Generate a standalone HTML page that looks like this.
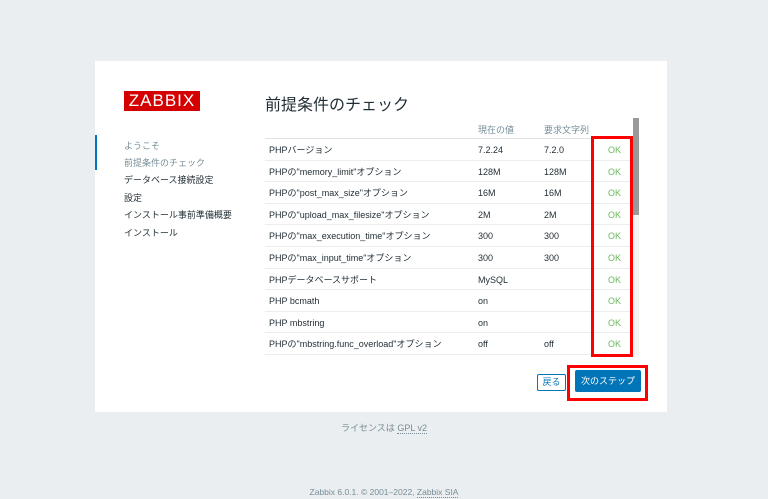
<!DOCTYPE html>
<html><head><meta charset="utf-8"><style>
*{margin:0;padding:0;box-sizing:border-box}
body{width:768px;height:499px;background:#ebeef0;font-family:"Liberation Sans","Noto Sans CJK JP",sans-serif;font-size:9px;color:#1f2c33;position:relative;overflow:hidden}
.panel{position:absolute;left:95px;top:61px;width:572px;height:351px;background:#fff}
.logo{position:absolute;left:124px;top:91px;width:76px;height:20px;background:#d40000;color:#fff;font-size:17px;letter-spacing:1px;text-align:center;line-height:20px}
.title{position:absolute;left:265px;top:91px;font-size:16px;color:#1f2c33}
.navbar{position:absolute;left:95px;top:135px;width:2px;height:35px;background:#0275b8}
.nav{position:absolute;left:124px;font-size:9px}
.g{color:#768d99}
.row{position:absolute;left:265px;width:367px;height:21.6px;border-bottom:1px solid #ebeef0;line-height:23px}
.row span{position:absolute}
.c1{left:4px}.c2{left:213px}.c3{left:279px}.c4{left:343px;color:#6cb85a}
.hdr{position:absolute;top:123px;color:#768d99}
.scroll{position:absolute;left:633px;top:118px;width:6px;height:238px;background:#f4f4f4}
.thumb{position:absolute;left:633px;top:118px;width:6px;height:97px;background:#999}
.red{position:absolute;border:3px solid #f00}
.btn{position:absolute;font-size:9px;text-align:center;border-radius:2px}
.foot{position:absolute;width:768px;text-align:center;color:#768d99;font-size:9px}
.foot u{text-decoration:none;border-bottom:1px dotted #768d99}
</style></head><body>
<div class="panel"></div>
<div class="logo">ZABBIX</div>
<div class="title">前提条件のチェック</div>
<div class="navbar"></div>
<div class="nav g" style="top:139px">ようこそ</div>
<div class="nav g" style="top:156px">前提条件のチェック</div>
<div class="nav" style="top:173px">データベース接続設定</div>
<div class="nav" style="top:191px">設定</div>
<div class="nav" style="top:208px">インストール事前準備概要</div>
<div class="nav" style="top:226px">インストール</div>
<div class="hdr" style="left:478px">現在の値</div>
<div class="hdr" style="left:544px">要求文字列</div>
<div style="position:absolute;left:265px;top:138px;width:367px;height:1px;background:#dde2e5"></div>
<div class="row" style="top:139px"><span class="c1">PHPバージョン</span><span class="c2">7.2.24</span><span class="c3">7.2.0</span><span class="c4">OK</span></div>
<div class="row" style="top:160.6px"><span class="c1">PHPの"memory_limit"オプション</span><span class="c2">128M</span><span class="c3">128M</span><span class="c4">OK</span></div>
<div class="row" style="top:182.2px"><span class="c1">PHPの"post_max_size"オプション</span><span class="c2">16M</span><span class="c3">16M</span><span class="c4">OK</span></div>
<div class="row" style="top:203.8px"><span class="c1">PHPの"upload_max_filesize"オプション</span><span class="c2">2M</span><span class="c3">2M</span><span class="c4">OK</span></div>
<div class="row" style="top:225.4px"><span class="c1">PHPの"max_execution_time"オプション</span><span class="c2">300</span><span class="c3">300</span><span class="c4">OK</span></div>
<div class="row" style="top:247px"><span class="c1">PHPの"max_input_time"オプション</span><span class="c2">300</span><span class="c3">300</span><span class="c4">OK</span></div>
<div class="row" style="top:268.6px"><span class="c1">PHPデータベースサポート</span><span class="c2">MySQL</span><span class="c4">OK</span></div>
<div class="row" style="top:290.2px"><span class="c1">PHP bcmath</span><span class="c2">on</span><span class="c4">OK</span></div>
<div class="row" style="top:311.8px"><span class="c1">PHP mbstring</span><span class="c2">on</span><span class="c4">OK</span></div>
<div class="row" style="top:333.4px"><span class="c1">PHPの"mbstring.func_overload"オプション</span><span class="c2">off</span><span class="c3">off</span><span class="c4">OK</span></div>
<div class="scroll"></div><div class="thumb"></div>
<div class="red" style="left:591px;top:136px;width:42px;height:221px"></div>
<div class="btn" style="left:537px;top:374px;width:29px;height:17px;line-height:15px;border:1px solid #0275b8;color:#0275b8;background:#fff">戻る</div>
<div class="btn" style="left:575px;top:370px;width:66px;height:22px;line-height:22px;background:#0275b8;color:#fff">次のステップ</div>
<div class="red" style="left:567px;top:365px;width:81px;height:36px"></div>
<div class="foot" style="top:421px">ライセンスは <u>GPL v2</u></div>
<div class="foot" style="top:487px;font-size:8.5px">Zabbix 6.0.1. © 2001–2022, <u>Zabbix SIA</u></div>
</body></html>
